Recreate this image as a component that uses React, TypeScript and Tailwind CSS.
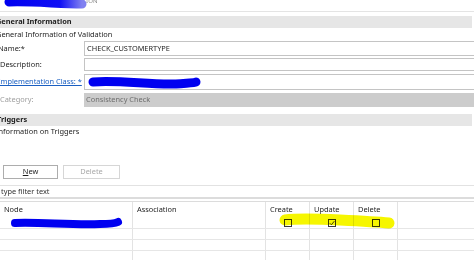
import React from 'react';

const cols = ['w-[133px]', 'w-[133px]', 'w-[44px]', 'w-[44px]', 'w-[44px]', 'flex-1'];

function Box({ checked }: { checked?: boolean }) {
  return (
    <div className="w-[8px] h-[8px] border border-[#3a3a3a] flex items-center justify-center">
      {checked && (
        <svg width="6" height="6" viewBox="0 0 6 6">
          <path d="M0.8 3.2 L2.4 4.8 L5.3 1.2" stroke="#333" strokeWidth="0.9" fill="none" />
        </svg>
      )}
    </div>
  );
}

function Row({ children, h = 'h-[11px]', border = true }: { children?: React.ReactNode[]; h?: string; border?: boolean }) {
  return (
    <div className={`flex ${h} ${border ? 'border-b border-[#e6e6e6]' : ''}`}>
      {cols.map((c, i) => (
        <div key={i} className={`${c} ${i < 5 ? 'border-r border-[#e3e3e3]' : ''} flex items-center justify-center`}>
          {children?.[i]}
        </div>
      ))}
    </div>
  );
}

export default function App() {
  return (
    <div
      className="relative w-[474px] h-[260px] overflow-hidden bg-white text-[7.4px] leading-none text-[#1e1e1e] whitespace-nowrap"
      style={{ fontFamily: '"Noto Sans", "Open Sans", sans-serif' }}
    >
      {/* title strip */}
      <div className="h-[12px] border-b border-[#e4e4e4] flex items-start">
        <span className="ml-[86px] mt-[-2px] text-[6px] text-[#8a8a8a] tracking-wide">ION</span>
      </div>

      <div className="mt-[4px] mr-[2px] h-[12px] bg-[#e6e6e6] flex items-center">
        <span className="ml-[-4px] font-bold">General Information</span>
      </div>
      <div className="h-[13px] flex items-center">
        <span className="ml-[-4px]">General Information of Validation</span>
      </div>

      {/* form */}
      <div className="flex flex-col">
        <div className="flex h-[15px] items-stretch">
          <div className="w-[84px] flex items-center"><span className="ml-[-2px]">Name:*</span></div>
          <div className="flex-1 border border-r-0 border-[#c4c4c4] flex items-center pl-[2px]">CHECK_CUSTOMERTYPE</div>
        </div>
        <div className="flex h-[13px] mt-[2px] items-stretch">
          <div className="w-[84px] flex items-center"><span>Description:</span></div>
          <div className="flex-1 border border-r-0 border-[#c4c4c4]" />
        </div>
        <div className="flex h-[16px] mt-[3px] items-stretch">
          <div className="w-[84px] flex items-center">
            <span className="ml-[-2px] text-[#1a5fc2] underline">Implementation Class: *</span>
          </div>
          <div className="flex-1 border border-r-0 border-[#c4c4c4]" />
        </div>
        <div className="flex h-[14px] mt-[3px] items-stretch">
          <div className="w-[84px] flex items-center"><span className="text-[#a0a0a0]">Category:</span></div>
          <div className="flex-1 bg-[#cccccc] flex items-center pl-[2px] text-[#6e6e6e]">Consistency Check</div>
        </div>
      </div>

      <div className="mt-[7px] mr-[2px] h-[12px] bg-[#e6e6e6] flex items-center">
        <span className="ml-[-3px] font-bold">Triggers</span>
      </div>
      <div className="h-[12px] flex items-center">
        <span className="ml-[-4px]">Information on Triggers</span>
      </div>

      {/* buttons */}
      <div className="mt-[27px] flex gap-[5px] pl-[3px]">
        <div className="w-[55px] h-[14px] border border-[#adadad] bg-white flex items-center justify-center">
          <span><span className="underline">N</span>ew</span>
        </div>
        <div className="w-[57px] h-[14px] border border-[#d6d6d6] bg-white flex items-center justify-center text-[#a8a8a8]">
          Delete
        </div>
      </div>

      {/* filter */}
      <div className="mt-[6px] h-[14px] border-t border-[#e2e2e2] border-b-2 border-b-[#dcdcdc] flex items-center">
        <span className="ml-[1px] text-[#333]">type filter text</span>
      </div>

      {/* table */}
      <div className="mt-[2px] border-t border-[#dcdcdc]">
        <div className="flex h-[16px]">
          {['Node', 'Association', 'Create', 'Update', 'Delete', ''].map((t, i) => (
            <div key={i} className={`${cols[i]} ${i < 5 ? 'border-r border-[#e3e3e3]' : ''} pl-[4px] flex items-center`}>
              {t}
            </div>
          ))}
        </div>
        <Row>
          {[null, null, <Box key="c" />, <Box key="u" checked />, <Box key="d" />, null]}
        </Row>
        <Row />
        <Row />
        <Row border={false} />
      </div>

      {/* annotations drawn over the screenshot */}
      <svg className="absolute inset-0 pointer-events-none" width="474" height="260">
        <defs>
          <linearGradient id="fade" x1="0" x2="1">
            <stop offset="0" stopColor="#0000f0" />
            <stop offset="0.7" stopColor="#1010f5" />
            <stop offset="1" stopColor="#8080f0" />
          </linearGradient>
        </defs>
        <path d="M9 2 C30 1 60 4 82 4" stroke="url(#fade)" strokeWidth="9" strokeLinecap="round" fill="none" />
        <path d="M93 82 C120 80 150 85 176 84 C186 83 194 83 196 82" stroke="#0000f0" strokeWidth="9" strokeLinecap="round" fill="none" />
        <path d="M15 223 C40 222 70 225 100 224 C110 224 116 223 118 222" stroke="#0000f0" strokeWidth="8" strokeLinecap="round" fill="none" />
        <path
          d="M285 220 C300 218 320 219 340 220 C360 221 378 222 389 223"
          stroke="#f6f600"
          strokeWidth="11"
          strokeLinecap="round"
          fill="none"
          style={{ mixBlendMode: 'multiply' }}
        />
      </svg>
    </div>
  );
}
